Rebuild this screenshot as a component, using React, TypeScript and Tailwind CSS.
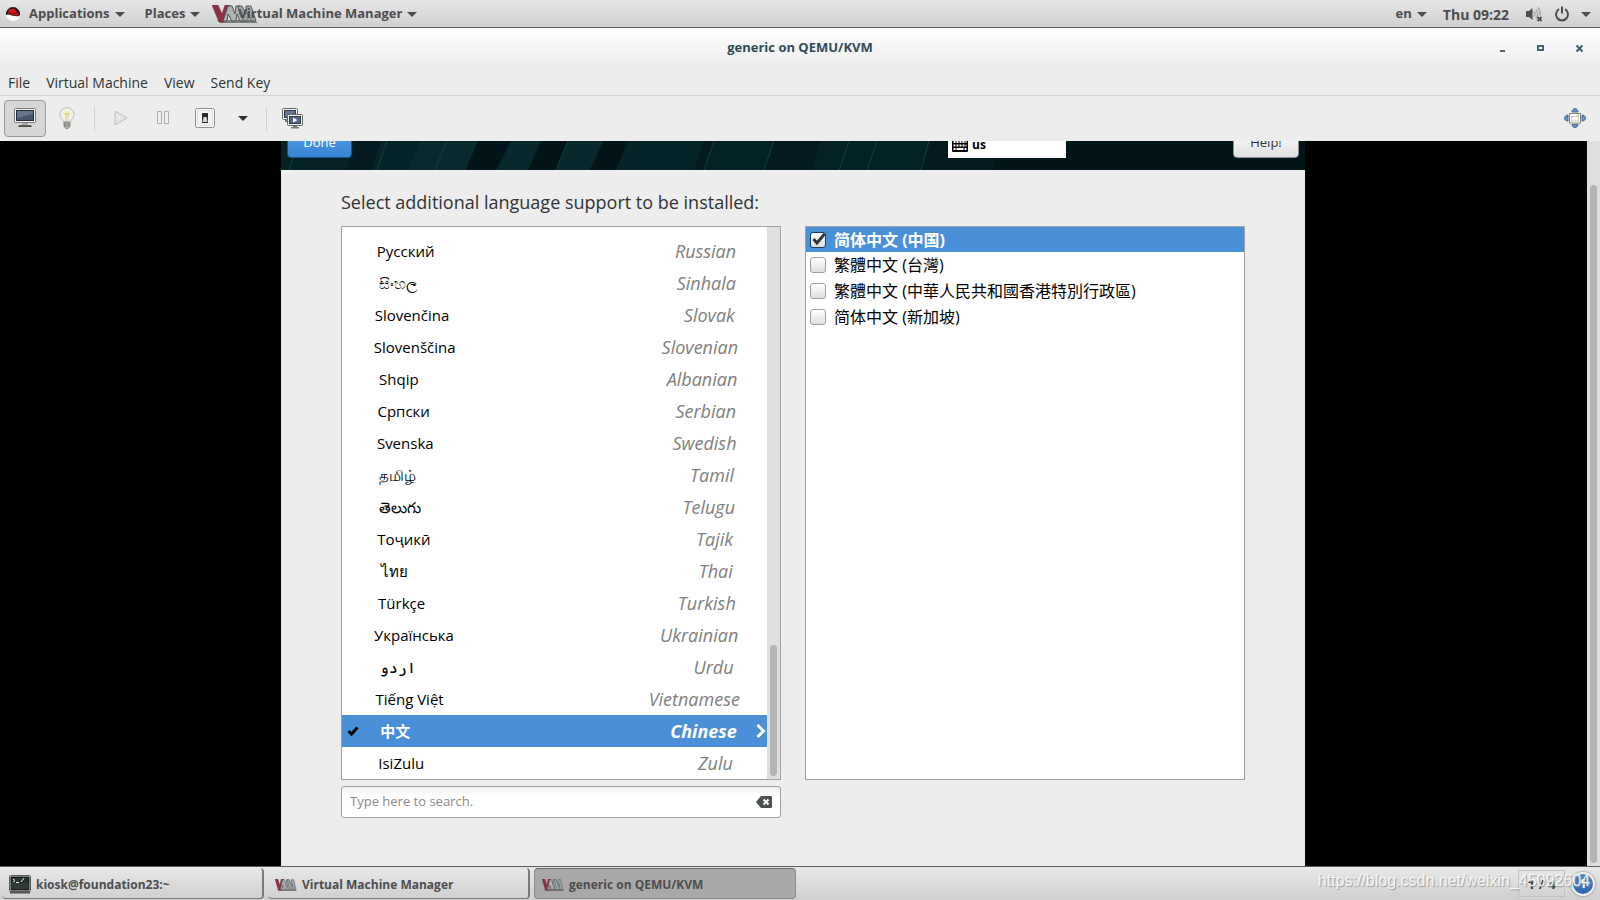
import { useState } from "react";
import { clsx } from "clsx";

type Language = {
  native: string;
  english: string;
  lang: string;
};

const LANGUAGES: Language[] = [
  { native: "Русский", english: "Russian", lang: "ru" },
  { native: "සිංහල", english: "Sinhala", lang: "si" },
  { native: "Slovenčina", english: "Slovak", lang: "sk" },
  { native: "Slovenščina", english: "Slovenian", lang: "sl" },
  { native: "Shqip", english: "Albanian", lang: "sq" },
  { native: "Српски", english: "Serbian", lang: "sr" },
  { native: "Svenska", english: "Swedish", lang: "sv" },
  { native: "தமிழ்", english: "Tamil", lang: "ta" },
  { native: "తెలుగు", english: "Telugu", lang: "te" },
  { native: "Тоҷикӣ", english: "Tajik", lang: "tg" },
  { native: "ไทย", english: "Thai", lang: "th" },
  { native: "Türkçe", english: "Turkish", lang: "tr" },
  { native: "Українська", english: "Ukrainian", lang: "uk" },
  { native: "اردو", english: "Urdu", lang: "ur" },
  { native: "Tiếng Việt", english: "Vietnamese", lang: "vi" },
  { native: "中文", english: "Chinese", lang: "zh" },
  { native: "IsiZulu", english: "Zulu", lang: "zu" },
];

const LOCALES = [
  { id: "zh_CN", label: "简体中文 (中国)", lang: "zh-CN" },
  { id: "zh_TW", label: "繁體中文 (台灣)", lang: "zh-TW" },
  { id: "zh_HK", label: "繁體中文 (中華人民共和國香港特別行政區)", lang: "zh-TW" },
  { id: "zh_SG", label: "简体中文 (新加坡)", lang: "zh-CN" },
];

const MENUS = ["File", "Virtual Machine", "View", "Send Key"];

function Caret({ className }: { className?: string }) {
  return (
    <svg viewBox="0 0 10 5" className={clsx("h-[5px] w-[10px]", className)} aria-hidden="true">
      <path d="M0 0h10L5 5z" fill="currentColor" />
    </svg>
  );
}

function RedHatIcon() {
  return (
    <svg viewBox="0 0 16 16" className="size-4" aria-hidden="true">
      <circle cx="8" cy="8" r="7" fill="#fafafa" />
      <path d="M1 9A7 7 0 0 1 8 1a7 7 0 0 1 7 8c-1 1.500-3 1.500-5 1C6 9.500 3 7.500 1 9z" fill="#1a1a1a" />
      <path d="M3.500 5.500C4 3 5.500 2.500 7 3c2-1 4 0 4.500 3 2 .8 2.500 2 1.500 3-2.500 1.200-8 .2-10.500-2.500-.5-.8.200-1.200 1-1z" fill="#d8131b" />
      <path d="M3.800 5.800c2 2 5 2.600 7.700 1.400" stroke="#3a0507" strokeWidth=".8" fill="none" />
    </svg>
  );
}

function VmmLogo({ className }: { className?: string }) {
  return (
    <svg viewBox="0 0 46 18" preserveAspectRatio="none" className={className} aria-hidden="true">
      <path d="M5 15h37l4 3H8z" fill="#444" opacity=".6" />
      <path d="M0 0h6l4 9 3-9h5l-6 17H7z" fill="#8e2f45" stroke="#5d3039" strokeWidth=".5" />
      <path d="M11 16L16 1h4l3 8 1-8h4l5 15h-5l-3-7-1 7h-4l-4-7-1 7z" fill="#aeb3b4" stroke="#4c5254" strokeWidth="1" />
      <path d="M26 1h4l4 8V1h5l5 15h-5l-3-8v8h-4l-4-6z" fill="#9ea3a4" stroke="#585d5f" strokeWidth="1" />
    </svg>
  );
}

function MonitorIcon() {
  return (
    <svg viewBox="0 0 22 20" className="h-5 w-[22px]" aria-hidden="true">
      <rect x=".5" y=".5" width="21" height="14" rx="1" fill="#f3f3f1" stroke="#777a77" />
      <rect x="2.500" y="2.500" width="17" height="10" fill="#46566d" stroke="#232c3a" />
      <path d="M3 3h16v3L3 10z" fill="#75859a" opacity=".7" />
      <path d="M8 15h6v2H8z" fill="#aaa" />
      <path d="M5 17h12l1 2H4z" fill="#555753" />
    </svg>
  );
}

function BulbIcon() {
  return (
    <svg viewBox="0 0 16 22" className="h-[22px] w-4" aria-hidden="true">
      <path d="M8 .7a7 7 0 0 0-7 6.800c0 3.500 3.300 4.500 3.500 7.500h7c.2-3 3.500-4 3.500-7.500A7 7 0 0 0 8 .7z" fill="#f3f3ec" stroke="#bdbdb5" />
      <ellipse cx="8" cy="6.500" rx="4" ry="2.500" fill="#f5f0b8" />
      <path d="M5.500 6l1.500 2 1-2 1 2 1.500-2M7 8v6m2-6v6" stroke="#cfc388" strokeWidth=".8" fill="none" />
      <path d="M5 15h6v4.500L9 21.500H7l-2-2z" fill="#b9bab7" stroke="#777a75" strokeWidth=".8" />
      <path d="M5 17h6M5 19h6" stroke="#666" strokeWidth=".7" />
    </svg>
  );
}

function PlayIcon() {
  return (
    <svg viewBox="0 0 14 16" className="h-4 w-[14px]" aria-hidden="true">
      <path d="M1 1.200v13.600L13 8z" fill="#e6e6e4" stroke="#bbbbb8" />
    </svg>
  );
}

function PauseIcon() {
  return (
    <svg viewBox="0 0 14 14" className="size-[14px]" aria-hidden="true">
      <path d="M1.500.5h4v12h-4zM8.500.5h4v12h-4z" fill="#efefec" stroke="#aeaeab" />
    </svg>
  );
}

function ShutdownIcon() {
  return (
    <svg viewBox="0 0 20 20" className="size-5" aria-hidden="true">
      <rect x=".5" y=".5" width="19" height="19" rx="2" fill="#fafafa" stroke="#8d8f8c" />
      <rect x="2.500" y="2.500" width="15" height="15" rx="1" fill="#f2f2f2" stroke="#ddd" />
      <rect x="7" y="5" width="6" height="10" fill="#2b2b2b" />
      <path d="M8.500 9h3l1 5h-5z" fill="#d5d5d5" />
    </svg>
  );
}

function SnapshotIcon() {
  return (
    <svg viewBox="0 0 22 22" className="size-[22px]" aria-hidden="true">
      <rect x=".5" y="1.500" width="15" height="11" rx="1" fill="#f3f3f1" stroke="#666966" />
      <rect x="2.500" y="3.500" width="11" height="7" fill="#65758c" stroke="#2e3b4e" />
      <path d="M3 14h3" stroke="#777" strokeWidth="2" />
      <rect x="5.500" y="7.500" width="15" height="11" rx="1" fill="#f3f3f1" stroke="#666966" />
      <rect x="7.500" y="9.500" width="11" height="7" fill="#536580" stroke="#2e3b4e" />
      <path d="M11 10.500v5l4.500-2.500z" fill="#fff" />
      <path d="M11 19h4v1h2v1.500H9V20h2z" fill="#777a76" />
    </svg>
  );
}

function ResizeIcon() {
  return (
    <svg viewBox="0 0 22 20" className="h-5 w-[22px]" aria-hidden="true">
      <g fill="#6d94c8" stroke="#2f5691" strokeWidth=".8">
        <path d="M8 4c0-2 1.500-3.500 3-3.500S14 2 14 4zM8 16.500c0 2 1.500 3 3 3s3-1 3-3z" />
        <path d="M4 7C2 7 .5 8.500.5 10.200S2 13 4 13zM18 7c2 0 3.500 1.500 3.500 3.200S20 13 18 13z" />
      </g>
      <rect x="5.500" y="5.500" width="11" height="9.500" fill="#fff" stroke="#85877a" />
      <rect x="7.500" y="8.500" width="7" height="4.500" fill="#fff" stroke="#c9cbb9" />
      <path d="M13 6.500h2v1h-2z" fill="#a9ab98" />
    </svg>
  );
}

function VolumeMutedIcon() {
  return (
    <svg viewBox="0 0 18 16" className="h-4 w-[18px]" aria-hidden="true">
      <path d="M1 5h3L7.500 2v12L4 11H1z" fill="#4d4d4d" />
      <path d="M9 5.500q1.800 2.500 0 5M11 3.500q3.500 4 0 9M13 1.500q3 3.500 2 8" stroke="#a9a9a9" strokeWidth="1.500" fill="none" />
      <path d="M12.500 11l4 4m0-4l-4 4" stroke="#4d4d4d" strokeWidth="1.800" />
    </svg>
  );
}

function PowerIcon() {
  return (
    <svg viewBox="0 0 16 16" className="size-4" aria-hidden="true">
      <path d="M5 3.200a6 6 0 1 0 6 0" stroke="#4d4d4d" strokeWidth="2" fill="none" />
      <path d="M8 .5v7" stroke="#4d4d4d" strokeWidth="2" />
    </svg>
  );
}

function KeyboardIcon() {
  return (
    <svg viewBox="0 0 16 13" className="h-[13px] w-4" aria-hidden="true">
      <rect width="16" height="13" rx="1" fill="#000" />
      <path d="M1.500 3h13M1.500 6.500h13" stroke="#fff" strokeWidth="2" strokeDasharray="2 1" />
      <path d="M1.500 10h2m1 0h7m1 0h2" stroke="#fff" strokeWidth="2" />
    </svg>
  );
}

function TerminalIcon() {
  return (
    <svg viewBox="0 0 22 19" className="h-[19px] w-[22px]" aria-hidden="true">
      <rect x=".5" y=".5" width="21" height="16" rx="1" fill="#e5e5e2" stroke="#5b5d5a" />
      <rect x="2" y="2" width="18" height="13" fill="#26302f" stroke="#111" />
      <path d="M4 4l2 1.500L4 7M7 7.500h3M12 7l3-4" stroke="#eee" fill="none" />
      <path d="M2 9h18M2 11h18M2 13h18" stroke="#46524f" strokeWidth=".6" />
      <path d="M1 17.500h20" stroke="#555" strokeWidth="2" />
    </svg>
  );
}

function TopBar() {
  return (
    <header className="flex h-7 items-center border-b border-[#5c5c5c] bg-linear-to-b from-[#e6e6e6] to-[#d0d0d0] pt-px pr-[9px] pl-[5px] text-[13px] font-bold text-[#4d4d4d]">
      <button type="button" className="flex items-center">
        <RedHatIcon />
        <span className="mr-[5px] ml-2">Applications</span>
        <Caret />
      </button>
      <button type="button" className="ml-5 flex items-center">
        <span className="mr-[5px]">Places</span>
        <Caret />
      </button>
      <button type="button" className="ml-3 flex items-center">
        <VmmLogo className="h-[18px] w-[46px]" />
        <span className="-ml-5">Virtual Machine Manager</span>
        <Caret className="ml-[5px]" />
      </button>
      <button type="button" className="ml-auto flex items-center">
        <span className="mr-[5px]">en</span>
        <Caret />
      </button>
      <button type="button" className="ml-4 text-[14px]">Thu 09:22</button>
      <button type="button" className="ml-4 flex items-center gap-[11px]" aria-label="System">
        <VolumeMutedIcon />
        <PowerIcon />
        <Caret />
      </button>
    </header>
  );
}

function TitleBar() {
  return (
    <div className="grid h-10 grid-cols-3 items-center bg-linear-to-b from-white to-[#ededed] pr-4 text-[13px] text-[#2e4a54]">
      <h1 className="col-start-2 pl-4 text-center font-bold">generic on QEMU/KVM</h1>
      <div className="flex justify-end gap-7 text-[#4a6570]">
        <button type="button" aria-label="Minimize">
          <svg viewBox="0 0 11 9" className="h-[9px] w-[11px]">
            <path d="M3 6h5v2H3z" fill="currentColor" />
          </svg>
        </button>
        <button type="button" aria-label="Maximize">
          <svg viewBox="0 0 11 9" className="h-[9px] w-[11px]">
            <path d="M2 2h5v4H2z" stroke="currentColor" strokeWidth="2" fill="none" />
          </svg>
        </button>
        <button type="button" aria-label="Close">
          <svg viewBox="0 0 9 9" className="size-[9px]">
            <path d="M1.500 1.500l6 6m0-6l-6 6" stroke="currentColor" strokeWidth="2.200" />
          </svg>
        </button>
      </div>
    </div>
  );
}

function MenuBar() {
  return (
    <nav className="flex h-7 items-center gap-4 border-b border-[#d3d3d3] px-2 pt-[2px] text-[14px] leading-5 text-[#2e3436]">
      {MENUS.map((menu) => (
        <button key={menu} type="button">
          {menu}
        </button>
      ))}
    </nav>
  );
}

function Toolbar() {
  return (
    <div className="flex h-[45px] items-center px-1">
      <button
        type="button"
        aria-label="Console"
        className="flex h-[37px] w-[42px] items-center justify-center rounded-sm border border-[#9a9a9a] bg-[#d6d6d6] pb-px"
      >
        <MonitorIcon />
      </button>
      <button type="button" aria-label="Details" className="flex h-9 w-[42px] items-center justify-center pb-px">
        <BulbIcon />
      </button>
      <span className="mr-[5px] ml-[6px] h-6 w-px bg-[#d0d0d0]" />
      <button type="button" aria-label="Run" className="flex h-9 w-[42px] items-center justify-center pb-px">
        <PlayIcon />
      </button>
      <button type="button" aria-label="Pause" className="flex h-9 w-[42px] items-center justify-center pb-px">
        <PauseIcon />
      </button>
      <button type="button" aria-label="Shut down" className="flex h-9 w-[42px] items-center justify-center pb-px">
        <ShutdownIcon />
      </button>
      <button type="button" aria-label="Shut down options" className="flex h-9 w-[34px] items-center justify-center text-[#2e3436]">
        <Caret />
      </button>
      <span className="mr-[5px] ml-[6px] h-6 w-px bg-[#d0d0d0]" />
      <button type="button" aria-label="Snapshots" className="flex h-9 w-[42px] items-center justify-center pb-px">
        <SnapshotIcon />
      </button>
      <button type="button" aria-label="Resize to VM" className="ml-auto flex h-9 w-[42px] items-center justify-center pb-px">
        <ResizeIcon />
      </button>
    </div>
  );
}

function InstallerHeader() {
  return (
    <div className="relative flex h-[29px] items-end overflow-hidden bg-[#021518] px-[6px] pb-3">
      <svg viewBox="0 0 1024 29" preserveAspectRatio="none" className="absolute inset-0 size-full" aria-hidden="true">
        <rect width="1024" height="29" fill="#031a1e" />
        <path d="M0 0h75L65 29H0z" fill="#062226" />
        <path d="M100 0h40l-12 29H90z" fill="#052328" />
        <path d="M140 0h57l-12 29h-59z" fill="#082a2f" />
        <path d="M230 0h40l-14 29h-41zM287 0h36l-14 29h-34z" fill="#07282d" />
        <path d="M197 0h33l-15 29h-30zM260 0h27l-12 29h-28zM323 0h24l-10 29h-28z" fill="#021417" />
        <path d="M347 0h76l-10 29h-78z" fill="#05242a" />
        <path d="M433 0h60l-10 29h-60zM540 0h110l-10 29H530z" fill="#042126" />
        <path d="M720 0h304v29H712z" fill="#02161a" />
        <path d="M18 0L8 29M106 0L96 29M166 0l-12 29M287 0l-12 29M433 0l-10 29M493 0l-10 29M568 0l-10 29M596 0l-10 29M648 0l-8 29" stroke="#0f4045" strokeWidth="1" fill="none" />
      </svg>
      <button
        type="button"
        className="relative h-[30px] w-[65px] rounded-sm border border-[#1c5187] bg-linear-to-b from-[#5a9fe2] to-[#3583d5] text-[13px] text-white"
      >
        Done
      </button>
      <button
        type="button"
        className="relative ml-auto flex h-[26px] w-[118px] items-center gap-1 bg-white px-1 text-[12px] font-bold text-black"
      >
        <KeyboardIcon />
        us
      </button>
      <button
        type="button"
        className="relative ml-[167px] h-[30px] w-[66px] rounded-sm border border-[#8d8d8d] bg-linear-to-b from-white to-[#e0e0e0] text-[13px] text-[#2e3436]"
      >
        Help!
      </button>
    </div>
  );
}

function LanguageRow({
  language,
  isSelected,
  onSelect,
}: {
  language: Language;
  isSelected: boolean;
  onSelect: () => void;
}) {
  return (
    <li>
      <button
        type="button"
        lang={language.lang}
        onClick={onSelect}
        className={clsx(
          "flex h-8 w-full items-center overflow-hidden whitespace-nowrap",
          isSelected ? "bg-[#4a90d9] font-bold text-white" : "text-black"
        )}
      >
        <span className="w-[30px] pl-[5px]">
          {isSelected ? (
            <svg viewBox="0 0 12 10" className="h-[10px] w-3" aria-hidden="true">
              <path d="M1.500 5l3 3L10.500 1.500" stroke="#000" strokeWidth="3" fill="none" />
            </svg>
          ) : null}
        </span>
        {/* shorter names drift towards the middle of the column */}
        <span className="flex w-24 pb-px text-[15px] leading-[30px]">
          <span className="grow" />
          <span>{language.native}</span>
          <span className="grow-[7]" />
        </span>
        <span
          className={clsx(
            "ml-auto flex w-[100px] pb-px text-[18px] leading-[30px] italic",
            isSelected ? "text-white" : "text-[#808080]"
          )}
        >
          <span className="grow-[7]" />
          <span>{language.english}</span>
          <span className="grow" />
        </span>
        <span className="flex w-[26px] justify-end pr-px">
          {isSelected ? (
            <svg viewBox="0 0 10 14" className="h-[14px] w-[10px]" aria-hidden="true">
              <path d="M1.500 1l6 6-6 6" stroke="#fff" strokeWidth="3" fill="none" />
            </svg>
          ) : null}
        </span>
      </button>
    </li>
  );
}

function LanguageSupport() {
  const [selected, setSelected] = useState("Chinese");
  const [locales, setLocales] = useState<string[]>(["zh_CN"]);
  const [query, setQuery] = useState("");

  function toggleLocale(id: string) {
    setLocales((current) =>
      current.includes(id) ? current.filter((item) => item !== id) : [...current, id]
    );
  }

  return (
    <section className="px-[60px] pt-5">
      <h2 className="h-9 text-[18px] leading-6 text-[#2e3436]">
        Select additional language support to be installed:
      </h2>
      <div className="grid grid-cols-2 items-start gap-6">
        <div>
          <div className="flex border border-[#a1a1a1] bg-white">
            <ul className="min-w-0 flex-1 pt-2">
              {LANGUAGES.map((language) => (
                <LanguageRow
                  key={language.english}
                  language={language}
                  isSelected={language.english === selected}
                  onSelect={() => setSelected(language.english)}
                />
              ))}
            </ul>
            <div className="flex w-[13px] flex-col justify-end bg-[#dfdfdf] px-[3px] pb-[3px]">
              <div className="h-[131px] rounded-full bg-[#b2b4b6]" />
            </div>
          </div>
          <div className="mt-[6px] flex h-8 items-center rounded-[3px] border border-[#a1a1a1] bg-linear-to-b from-[#f2f2f2] to-white to-30% px-2">
            <input
              type="text"
              aria-label="Search languages"
              placeholder="Type here to search."
              value={query}
              onChange={(event) => setQuery(event.target.value)}
              className="min-w-0 flex-1 bg-transparent text-[13px] outline-none placeholder:text-[#8b8b8b]"
            />
            <button type="button" aria-label="Clear search" onClick={() => setQuery("")}>
              <svg viewBox="0 0 16 12" className="h-3 w-4">
                <path d="M0 6l5-6h10q1 0 1 1v10q0 1-1 1H5z" fill="#4a4f52" />
                <path d="M7.500 3.500l5 5m0-5l-5 5" stroke="#fff" strokeWidth="2" />
              </svg>
            </button>
          </div>
        </div>
        <div className="h-[554px] border border-[#a1a1a1] bg-white">
          {LOCALES.map((locale) => {
            const isChecked = locales.includes(locale.id);
            return (
              <label
                key={locale.id}
                lang={locale.lang}
                className={clsx(
                  "flex items-center gap-2 pl-1 text-[16px]",
                  isChecked
                    ? "h-[25px] bg-[#4a90d9] leading-6 font-bold text-white"
                    : "h-[26px] leading-[26px] text-black"
                )}
              >
                <span className="relative flex size-4">
                  <input
                    type="checkbox"
                    checked={isChecked}
                    onChange={() => toggleLocale(locale.id)}
                    className={clsx(
                      "size-4 appearance-none rounded-[3px] border bg-linear-to-b from-white to-[#dedede]",
                      isChecked ? "border-[#1c3f66]" : "border-[#a1a1a1]"
                    )}
                  />
                  {isChecked ? (
                    <svg viewBox="0 0 16 16" className="pointer-events-none absolute inset-0 size-4" aria-hidden="true">
                      <path d="M3.500 7l3.500 4 7.500-9" stroke="#2e3436" strokeWidth="2.800" fill="none" />
                    </svg>
                  ) : null}
                </span>
                {locale.label}
              </label>
            );
          })}
        </div>
      </div>
    </section>
  );
}

function Taskbar() {
  return (
    <footer className="relative flex h-[34px] items-center border-t border-[#5c5c5c] bg-linear-to-b from-[#e8e8e8] to-[#cfcfcf] pr-[5px] pl-[2px] text-[13px] font-bold text-[#4d4d4d]">
      <div className="flex gap-1">
        <button type="button" className="flex h-[31px] w-[262px] items-center gap-[5px] rounded-sm border-r-2 border-b border-[#7a7a7a] pt-[3px] pl-[7px] text-[12px]">
          <TerminalIcon />
          kiosk@foundation23:~
        </button>
        <button type="button" className="flex h-[31px] w-[262px] items-center gap-[5px] rounded-sm border-r-2 border-b border-[#7a7a7a] pt-[3px] pl-[7px] text-[12px]">
          <VmmLogo className="h-3 w-[22px]" />
          Virtual Machine Manager
        </button>
        <button type="button" className="flex h-[31px] w-[262px] items-center gap-[5px] rounded-sm border border-[#8a8a8a] border-t-[#6a6a6a] bg-[#a9a9a9] pt-[3px] pl-[7px] text-[12px]">
          <VmmLogo className="h-3 w-[22px]" />
          generic on QEMU/KVM
        </button>
      </div>
      <span className="ml-auto flex h-[27px] w-[47px] items-center justify-center gap-1 border border-[#c2c2c2] pt-[2px] text-[#333]">
        <span>1</span>
        <span>/</span>
        <span>4</span>
      </span>
      <button
        type="button"
        aria-label="Notifications"
        className="ml-[6px] flex size-6 items-center justify-center rounded-full border-2 border-[#f0f0f0] bg-linear-to-b from-[#4f86c6] to-[#2f66ad] text-white shadow-[0_0_2px_#555]"
      >
        1
      </button>
      <span className="pointer-events-none absolute top-1 right-[10px] font-['Liberation_Sans'] text-[16px] leading-5 font-normal text-white/85 [text-shadow:1px_1px_1px_#999]">
        https://blog.csdn.net/weixin_45092604
      </span>
    </footer>
  );
}

export default function App() {
  return (
    <div className="flex min-h-screen flex-col bg-[#ededed] font-['Open_Sans','Noto_Sans','Noto_Sans_CJK_SC',sans-serif]">
      <TopBar />
      <TitleBar />
      <MenuBar />
      <Toolbar />
      <main className="flex flex-1 bg-black">
        <div className="flex flex-1 justify-center pr-px">
          <div className="w-full max-w-[1024px] bg-[#ededed]">
            <InstallerHeader />
            <LanguageSupport />
          </div>
        </div>
        <div className="flex w-[13px] flex-col bg-[#dfdfdf] px-[3px] pt-11 pb-[3px]">
          <div className="flex-1 rounded-full bg-[#b2b4b6]" />
        </div>
      </main>
      <Taskbar />
    </div>
  );
}
